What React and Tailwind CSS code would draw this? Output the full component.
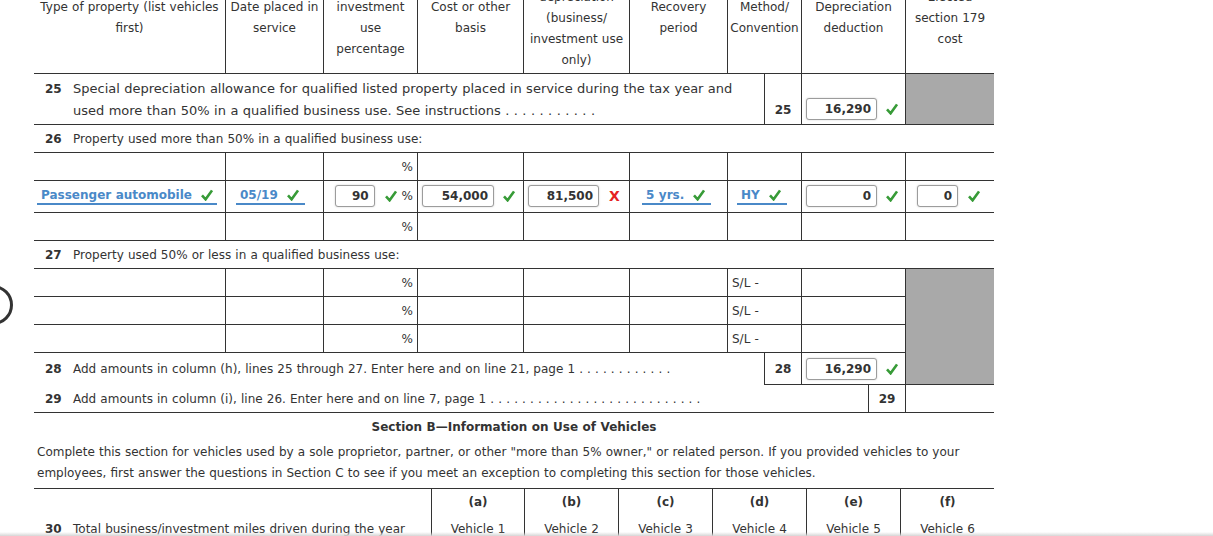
import React from "react";

const cols9 = "grid-cols-[192px_98px_94px_106px_106px_98px_74px_104px_88px]";
const cols8 = "grid-cols-[192px_98px_94px_106px_106px_98px_74px_104px]";

function Check({ className = "" }) {
  return (
    <svg width="12" height="12" viewBox="0 0 12 12" className={`shrink-0 ${className}`}>
      <path d="M1 6.3 L4.6 10.3 L11 1.4" fill="none" stroke="#379b37" strokeWidth="2.6" />
    </svg>
  );
}

function Cross({ className = "" }) {
  return <span className={`text-[14px] font-bold leading-none text-[#e52222] ${className}`}>X</span>;
}

function Field({ value, w }) {
  return (
    <div
      className={`${w} h-[22px] flex items-center justify-end pr-[5px] rounded-[3px] border border-[#9c9c9c] bg-white font-bold shadow-[0_0_2px_rgba(0,0,0,0.2)]`}
    >
      {value}
    </div>
  );
}

function Pick({ text, w = "" }) {
  return (
    <div className={`${w} inline-flex shrink-0 items-center whitespace-nowrap border-b-2 border-[#4a89c8] pl-[4px] pr-[6px] leading-[16px] font-bold text-[#4a89c8]`}>
      <span>{text}</span>
      <Check className="ml-[9px]" />
    </div>
  );
}

function GridRow({ template, cells, h, lastBorder = false, inner = "" }) {
  return (
    <div className={`grid ${template} ${h}`}>
      {cells.map((c, i) => (
        <div
          key={i}
          className={`flex items-center min-w-0 border-b border-[#333] ${inner} ${
            i < cells.length - 1 || lastBorder ? "border-r" : ""
          } ${c.cls || ""}`}
        >
          {c.content}
        </div>
      ))}
    </div>
  );
}

const empty = (n) => Array.from({ length: n }, () => ({}));

function pctRow(n, extra = {}) {
  const cells = empty(n);
  cells[2] = { cls: "justify-end pr-[4px]", content: "%" };
  Object.keys(extra).forEach((k) => (cells[k] = extra[k]));
  return cells;
}

const headers = [
  "Type of property (list vehicles first)",
  "Date placed in service",
  "Business/ investment use percentage",
  "Cost or other basis",
  "Basis for depreciation (business/ investment use only)",
  "Recovery period",
  "Method/ Convention",
  "Depreciation deduction",
  "Elected section 179 cost",
];

function Num({ n }) {
  return <span className="w-[28px] shrink-0 text-[12px] font-bold">{n}</span>;
}

export default function App() {
  const entries = [
    { cls: "pl-[3px]", content: <Pick text="Passenger automobile" w="w-[180px]" /> },
    { cls: "pl-[10px]", content: <Pick text="05/19" /> },
    {
      cls: "justify-end pr-[4px]",
      content: (
        <>
          <Field value="90" w="w-[40px]" />
          <Check className="ml-[10px]" />
          <span className="ml-[5px]">%</span>
        </>
      ),
    },
    {
      cls: "pl-[4px]",
      content: (
        <>
          <Field value="54,000" w="w-[72px]" />
          <Check className="ml-[9px]" />
        </>
      ),
    },
    {
      cls: "pl-[4px]",
      content: (
        <>
          <Field value="81,500" w="w-[71px]" />
          <Cross className="ml-[10px]" />
        </>
      ),
    },
    { cls: "pl-[12px]", content: <Pick text="5 yrs." /> },
    { cls: "pl-[9px]", content: <Pick text="HY" /> },
    {
      cls: "pl-[4px]",
      content: (
        <>
          <Field value="0" w="w-[71px]" />
          <Check className="ml-[9px]" />
        </>
      ),
    },
    {
      cls: "pl-[11px]",
      content: (
        <>
          <Field value="0" w="w-[41px]" />
          <Check className="ml-[10px]" />
        </>
      ),
    },
  ];

  const slRow = pctRow(8, { 6: { cls: "pl-[4px]", content: "S/L -" } });

  return (
    <div className="relative h-[536px] overflow-hidden bg-white font-['DejaVu_Sans',Verdana,sans-serif] text-[12px] text-[#333] [word-spacing:0.3px]">
      <div className="ml-[34px] mt-[-39px] w-[960px]">
        {/* column headings */}
        <div className={`grid ${cols9} h-[113px] border-b border-[#333]`}>
          {headers.map((t, i) => (
            <div
              key={i}
              className={`flex items-center justify-center px-[2px] pt-[2px] text-center leading-[21px] ${
                i < 8 ? "border-r border-[#333]" : ""
              }`}
            >
              {t}
            </div>
          ))}
        </div>

        {/* line 25 */}
        <div className="flex h-[51px] border-b border-[#333]">
          <div className="flex flex-1 pl-[11px] pt-[4px] leading-[22px]">
            <Num n="25" />
            <div className="text-[13px]">
              Special depreciation allowance for qualified listed property placed in service during the tax year and
              <br />
              used more than 50% in a qualified business use. See instructions . . . . . . . . . . .
            </div>
          </div>
          <div className="flex w-[38px] items-end justify-center border-x border-[#333] pb-[6px] font-bold leading-[16px]">
            25
          </div>
          <div className="flex w-[104px] items-end border-r border-[#333] pb-[4px] pl-[4px]">
            <div className="flex items-center">
              <Field value="16,290" w="w-[71px]" />
              <Check className="ml-[9px]" />
            </div>
          </div>
          <div className="w-[88px] bg-[#a9a9a9]" />
        </div>

        {/* line 26 */}
        <div className="flex h-[28px] items-center border-b border-[#333] pl-[11px]">
          <Num n="26" />
          Property used more than 50% in a qualified business use:
        </div>
        <GridRow template={cols9} h="h-[28px]" cells={pctRow(9)} />
        <GridRow template={cols9} h="h-[32px]" cells={entries} inner="pb-[2px]" />
        <GridRow template={cols9} h="h-[28px]" cells={pctRow(9)} />

        {/* line 27 */}
        <div className="flex h-[28px] items-center border-b border-[#333] pl-[11px]">
          <Num n="27" />
          Property used 50% or less in a qualified business use:
        </div>
        <div className="flex">
          <div className="flex w-[872px] flex-col">
            <GridRow template={cols8} h="h-[28px]" cells={slRow} lastBorder />
            <GridRow template={cols8} h="h-[28px]" cells={slRow} lastBorder />
            <GridRow template={cols8} h="h-[28px]" cells={slRow} lastBorder />
            {/* line 28 */}
            <div className="flex h-[32px]">
              <div className="flex flex-1 items-center pl-[11px]">
                <Num n="28" />
                Add amounts in column (h), lines 25 through 27. Enter here and on line 21, page 1 . . . . . . . . . . . .
              </div>
              <div className="flex w-[38px] items-center justify-center border-x border-b border-[#333] font-bold">28</div>
              <div className="flex w-[104px] items-center border-r border-b border-[#333] pl-[4px]">
                <Field value="16,290" w="w-[71px]" />
                <Check className="ml-[9px]" />
              </div>
            </div>
          </div>
          <div className="w-[88px] border-b border-[#333] bg-[#a9a9a9]" />
        </div>

        {/* line 29 */}
        <div className="flex h-[28px] border-b border-[#333]">
          <div className="flex flex-1 items-center pl-[11px]">
            <Num n="29" />
            Add amounts in column (i), line 26. Enter here and on line 7, page 1 . . . . . . . . . . . . . . . . . . . . . . . . . . .
          </div>
          <div className="flex w-[38px] items-center justify-center border-x border-[#333] font-bold">29</div>
          <div className="w-[88px]" />
        </div>

        {/* Section B */}
        <div className="flex h-[28px] items-center justify-center font-bold">
          Section B—Information on Use of Vehicles
        </div>
        <p className="h-[48px] border-b border-[#333] pl-[3px] pt-[1px] leading-[21px]">
          Complete this section for vehicles used by a sole proprietor, partner, or other "more than 5% owner," or related
          person. If you provided vehicles to your employees, first answer the questions in Section C to see if you meet an
          exception to completing this section for those vehicles.
        </p>
        <div className="grid grid-cols-[398px_93px_94px_94px_94px_94px_93px]">
          <div className="flex flex-col border-r border-[#333]">
            <div className="h-[26px]" />
            <div className="flex h-[28px] items-center pl-[11px]">
              <Num n="30" />
              Total business/investment miles driven during the year
            </div>
          </div>
          {["a", "b", "c", "d", "e", "f"].map((l, i) => (
            <div key={l} className={`flex flex-col items-center ${i < 5 ? "border-r border-[#333]" : ""}`}>
              <div className="flex h-[26px] items-center font-bold">({l})</div>
              <div className="flex h-[28px] items-center">Vehicle {i + 1}</div>
            </div>
          ))}
        </div>
      </div>

      <div className="absolute left-[-27px] top-[285px] h-[40px] w-[40px] rounded-full border-[3px] border-[#333]" />
      <div className="absolute bottom-0 left-0 right-0 h-[4px] bg-linear-to-t from-[#d6d6d6] to-transparent" />
    </div>
  );
}
